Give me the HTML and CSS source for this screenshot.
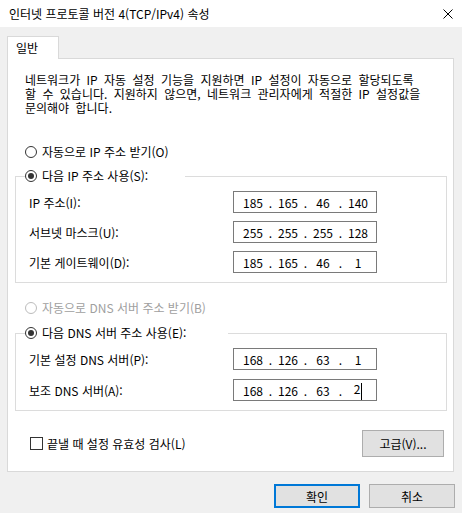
FILE: index.html
```html
<!DOCTYPE html>
<html lang="ko">
<head>
    <meta charset="UTF-8">
    <title>인터넷 프로토콜 버전 4(TCP/IPv4) 속성</title>
    <link rel="stylesheet" href="styles.css">
</head>
<body>
<div class="window">
    <div class="titlebar">
        <span class="title">인터넷 프로토콜 버전 4(TCP/IPv4) 속성</span>
        <svg class="close" width="10" height="10" viewBox="0 0 10 10"><path d="M0.5 0.5 L9.5 9.5 M9.5 0.5 L0.5 9.5" stroke="#000" stroke-width="1" fill="none"/></svg>
    </div>

    <div class="tabs">
        <div class="tab">일반</div>
    </div>

    <div class="panel">
        <p class="desc">네트워크가 IP 자동 설정 기능을 지원하면 IP 설정이 자동으로 할당되도록<br>할 수 있습니다. 지원하지 않으면, 네트워크 관리자에게 적절한 IP 설정값을<br>문의해야 합니다.</p>

        <div class="option auto-ip"><span class="radio"></span>자동으로 IP 주소 받기(O)</div>

        <fieldset class="group group-ip">
            <legend class="option"><span class="radio checked"></span>다음 IP 주소 사용(S):</legend>
            <div class="field-row">
                <span class="field-label">IP 주소(I):</span>
                <div class="ipbox"><span class="oct">185</span><span class="dot">.</span><span class="oct">165</span><span class="dot">.</span><span class="oct">46</span><span class="dot">.</span><span class="oct">140</span></div>
            </div>
            <div class="field-row">
                <span class="field-label">서브넷 마스크(U):</span>
                <div class="ipbox"><span class="oct">255</span><span class="dot">.</span><span class="oct">255</span><span class="dot">.</span><span class="oct">255</span><span class="dot">.</span><span class="oct">128</span></div>
            </div>
            <div class="field-row">
                <span class="field-label">기본 게이트웨이(D):</span>
                <div class="ipbox"><span class="oct">185</span><span class="dot">.</span><span class="oct">165</span><span class="dot">.</span><span class="oct">46</span><span class="dot">.</span><span class="oct">1</span></div>
            </div>
        </fieldset>

        <div class="option auto-dns disabled"><span class="radio"></span>자동으로 DNS 서버 주소 받기(B)</div>

        <fieldset class="group group-dns">
            <legend class="option"><span class="radio checked"></span>다음 DNS 서버 주소 사용(E):</legend>
            <div class="field-row">
                <span class="field-label">기본 설정 DNS 서버(P):</span>
                <div class="ipbox"><span class="oct">168</span><span class="dot">.</span><span class="oct">126</span><span class="dot">.</span><span class="oct">63</span><span class="dot">.</span><span class="oct">1</span></div>
            </div>
            <div class="field-row">
                <span class="field-label">보조 DNS 서버(A):</span>
                <div class="ipbox"><span class="oct">168</span><span class="dot">.</span><span class="oct">126</span><span class="dot">.</span><span class="oct">63</span><span class="dot">.</span><span class="oct">2<span class="caret"></span></span></div>
            </div>
        </fieldset>

        <div class="bottom-row">
            <div class="check-option"><span class="checkbox"></span>끝낼 때 설정 유효성 검사(L)</div>
            <button class="btn btn-adv">고급(V)...</button>
        </div>
    </div>

    <div class="footer">
        <button class="btn btn-ok">확인</button>
        <button class="btn btn-cancel">취소</button>
    </div>
</div>
</body>
</html>
```

FILE: styles.css
```css
body {
    margin: 0;
    background-color: #f0f0f0;
    font-family: "Noto Sans CJK KR", "Noto Sans", sans-serif;
    font-size: 12px;
    color: #000;
}
.window {
    width: 462px;
    height: 513px;
}
.titlebar {
    height: 27px;
    background-color: #fff;
    display: flex;
    align-items: center;
    justify-content: space-between;
    padding: 0 9px;
    box-sizing: border-box;
}
.title {
    line-height: 14px;
}
.tabs {
    display: flex;
    padding: 9px 0 0 7px;
}
.tab {
    width: 52px;
    height: 23px;
    box-sizing: border-box;
    border: 1px solid #d9d9d9;
    border-bottom: none;
    background-color: #fff;
    padding-left: 8px;
    line-height: 21px;
    margin-bottom: -1px;
    position: relative;
    z-index: 1;
}
.panel {
    margin-left: 7px;
    width: 447px;
    height: 414px;
    box-sizing: border-box;
    border: 1px solid #d9d9d9;
    background-color: #fff;
    padding: 0 6px 0 7px;
}
.desc {
    margin: 14px 0 0 10px;
    line-height: 14px;
    word-spacing: 3px;
}
.option {
    display: flex;
    align-items: center;
    height: 18px;
    line-height: 18px;
    white-space: nowrap;
}
.auto-ip {
    margin: 28px 0 0 10px;
}
.auto-dns {
    margin: 16px 0 0 10px;
}
.disabled {
    color: #a0a0a0;
}
.radio {
    width: 12px;
    height: 12px;
    box-sizing: border-box;
    border: 1px solid #333;
    border-radius: 50%;
    margin-right: 5px;
    display: flex;
    align-items: center;
    justify-content: center;
    flex-shrink: 0;
}
.disabled .radio {
    border-color: #bcbcbc;
}
.radio.checked::after {
    content: "";
    width: 6px;
    height: 6px;
    border-radius: 50%;
    background-color: #333;
}
.group {
    margin: 6px 0 0 0;
    border: 1px solid #dcdcdc;
    padding: 6px 0 9px 13px;
    min-width: 0;
}
.group-dns {
    margin-top: 7px;
}
.group legend {
    width: 160px;
    padding: 0;
    margin-left: -4px;
}
.group-dns legend {
    width: 203px;
}
.field-row {
    display: flex;
    align-items: center;
    height: 22px;
}
.field-row + .field-row {
    margin-top: 8px;
}
.group-dns .field-row + .field-row {
    margin-top: 9px;
}
.field-label {
    width: 204px;
}
.ipbox {
    width: 144px;
    height: 22px;
    box-sizing: border-box;
    border: 1px solid #7a7a7a;
    display: flex;
    align-items: center;
    padding-left: 6px;
}
.oct {
    width: 26px;
    text-align: center;
}
.dot {
    width: 9px;
    text-align: center;
}
.caret {
    display: inline-block;
    width: 1px;
    height: 17px;
    background-color: #000;
    vertical-align: middle;
    margin-left: 1px;
}
.bottom-row {
    display: flex;
    justify-content: space-between;
    align-items: center;
    margin-top: 19px;
    padding: 0 3px 0 15px;
}
.check-option {
    display: flex;
    align-items: center;
}
.checkbox {
    width: 13px;
    height: 13px;
    box-sizing: border-box;
    border: 1px solid #333;
    margin-right: 4px;
}
.btn {
    background-color: #e1e1e1;
    border: 1px solid #adadad;
    font-family: inherit;
    font-size: 12px;
    color: #000;
    padding: 0;
    box-sizing: border-box;
}
.btn-adv {
    width: 82px;
    height: 27px;
}
.footer {
    display: flex;
    justify-content: flex-end;
    gap: 9px;
    padding: 12px 7px 0 0;
}
.btn-ok,
.btn-cancel {
    width: 86px;
    height: 24px;
}
.btn-ok {
    border: 2px solid #0078d7;
}
```
